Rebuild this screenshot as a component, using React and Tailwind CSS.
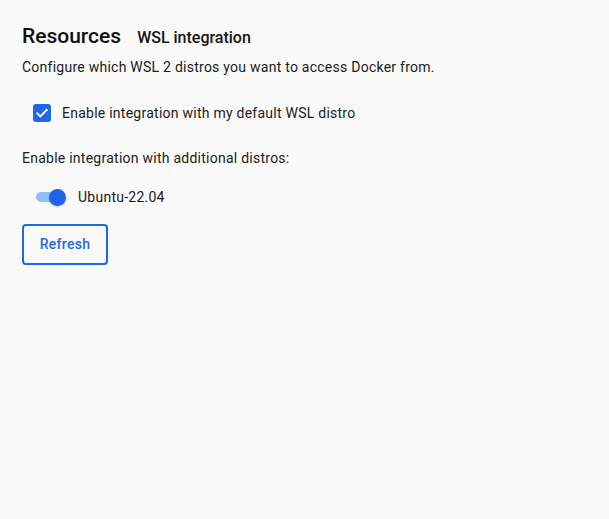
export default function App() {
  return (
    <div className="min-h-screen bg-[#fafafa] text-black pl-[22px] pt-[22px]" style={{ fontFamily: 'Roboto, "Noto Sans", sans-serif' }}>
      <div className="flex items-baseline gap-4">
        <h1 className="text-[21px] font-medium leading-[28px] text-[#0f0f0f]">Resources</h1>
        <h2 className="text-[16px] font-medium leading-[28px] text-[#141414]">WSL integration</h2>
      </div>
      <p className="mt-[5px] text-[14px] leading-[20px] tracking-[0.25px] text-[#1a1a1a]">
        Configure which WSL 2 distros you want to access Docker from.
      </p>

      <label className="mt-[26px] flex items-center gap-[11px] pl-[11px]">
        <span className="flex h-[18px] w-[18px] items-center justify-center rounded-[3px] bg-[#2067e8]">
          <svg viewBox="0 0 24 24" className="h-[16px] w-[16px]" fill="none" stroke="white" strokeWidth="3" strokeLinecap="square">
            <path d="M5 12.5l4.5 4.5L19 7.5" />
          </svg>
        </span>
        <span className="text-[14px] leading-[20px] tracking-[0.25px] text-[#1a1a1a]">Enable integration with my default WSL distro</span>
      </label>

      <p className="mt-[25px] text-[14px] leading-[20px] tracking-[0.25px] text-[#1a1a1a]">
        Enable integration with additional distros:
      </p>

      <div className="mt-[19px] flex items-center gap-[12px] pl-[14px]">
        <span className="relative block h-[20px] w-[30px]">
          <span className="absolute left-0 top-[5px] h-[10px] w-[24px] rounded-full bg-[#8cc1f7]" />
          <span className="absolute right-0 top-[2px] h-[17px] w-[17px] rounded-full bg-[#1f63ec] shadow-[0_1px_2px_rgba(0,0,0,0.25)]" />
        </span>
        <span className="text-[14px] leading-[20px] tracking-[0.25px] text-[#1a1a1a]">Ubuntu-22.04</span>
      </div>

      <button className="mt-[17px] flex h-[41px] w-[86px] items-center justify-center rounded-[4px] border-2 border-[#1f66eb] text-[14px] font-medium tracking-[0.3px] text-[#1f66eb]">
        Refresh
      </button>
    </div>
  );
}
